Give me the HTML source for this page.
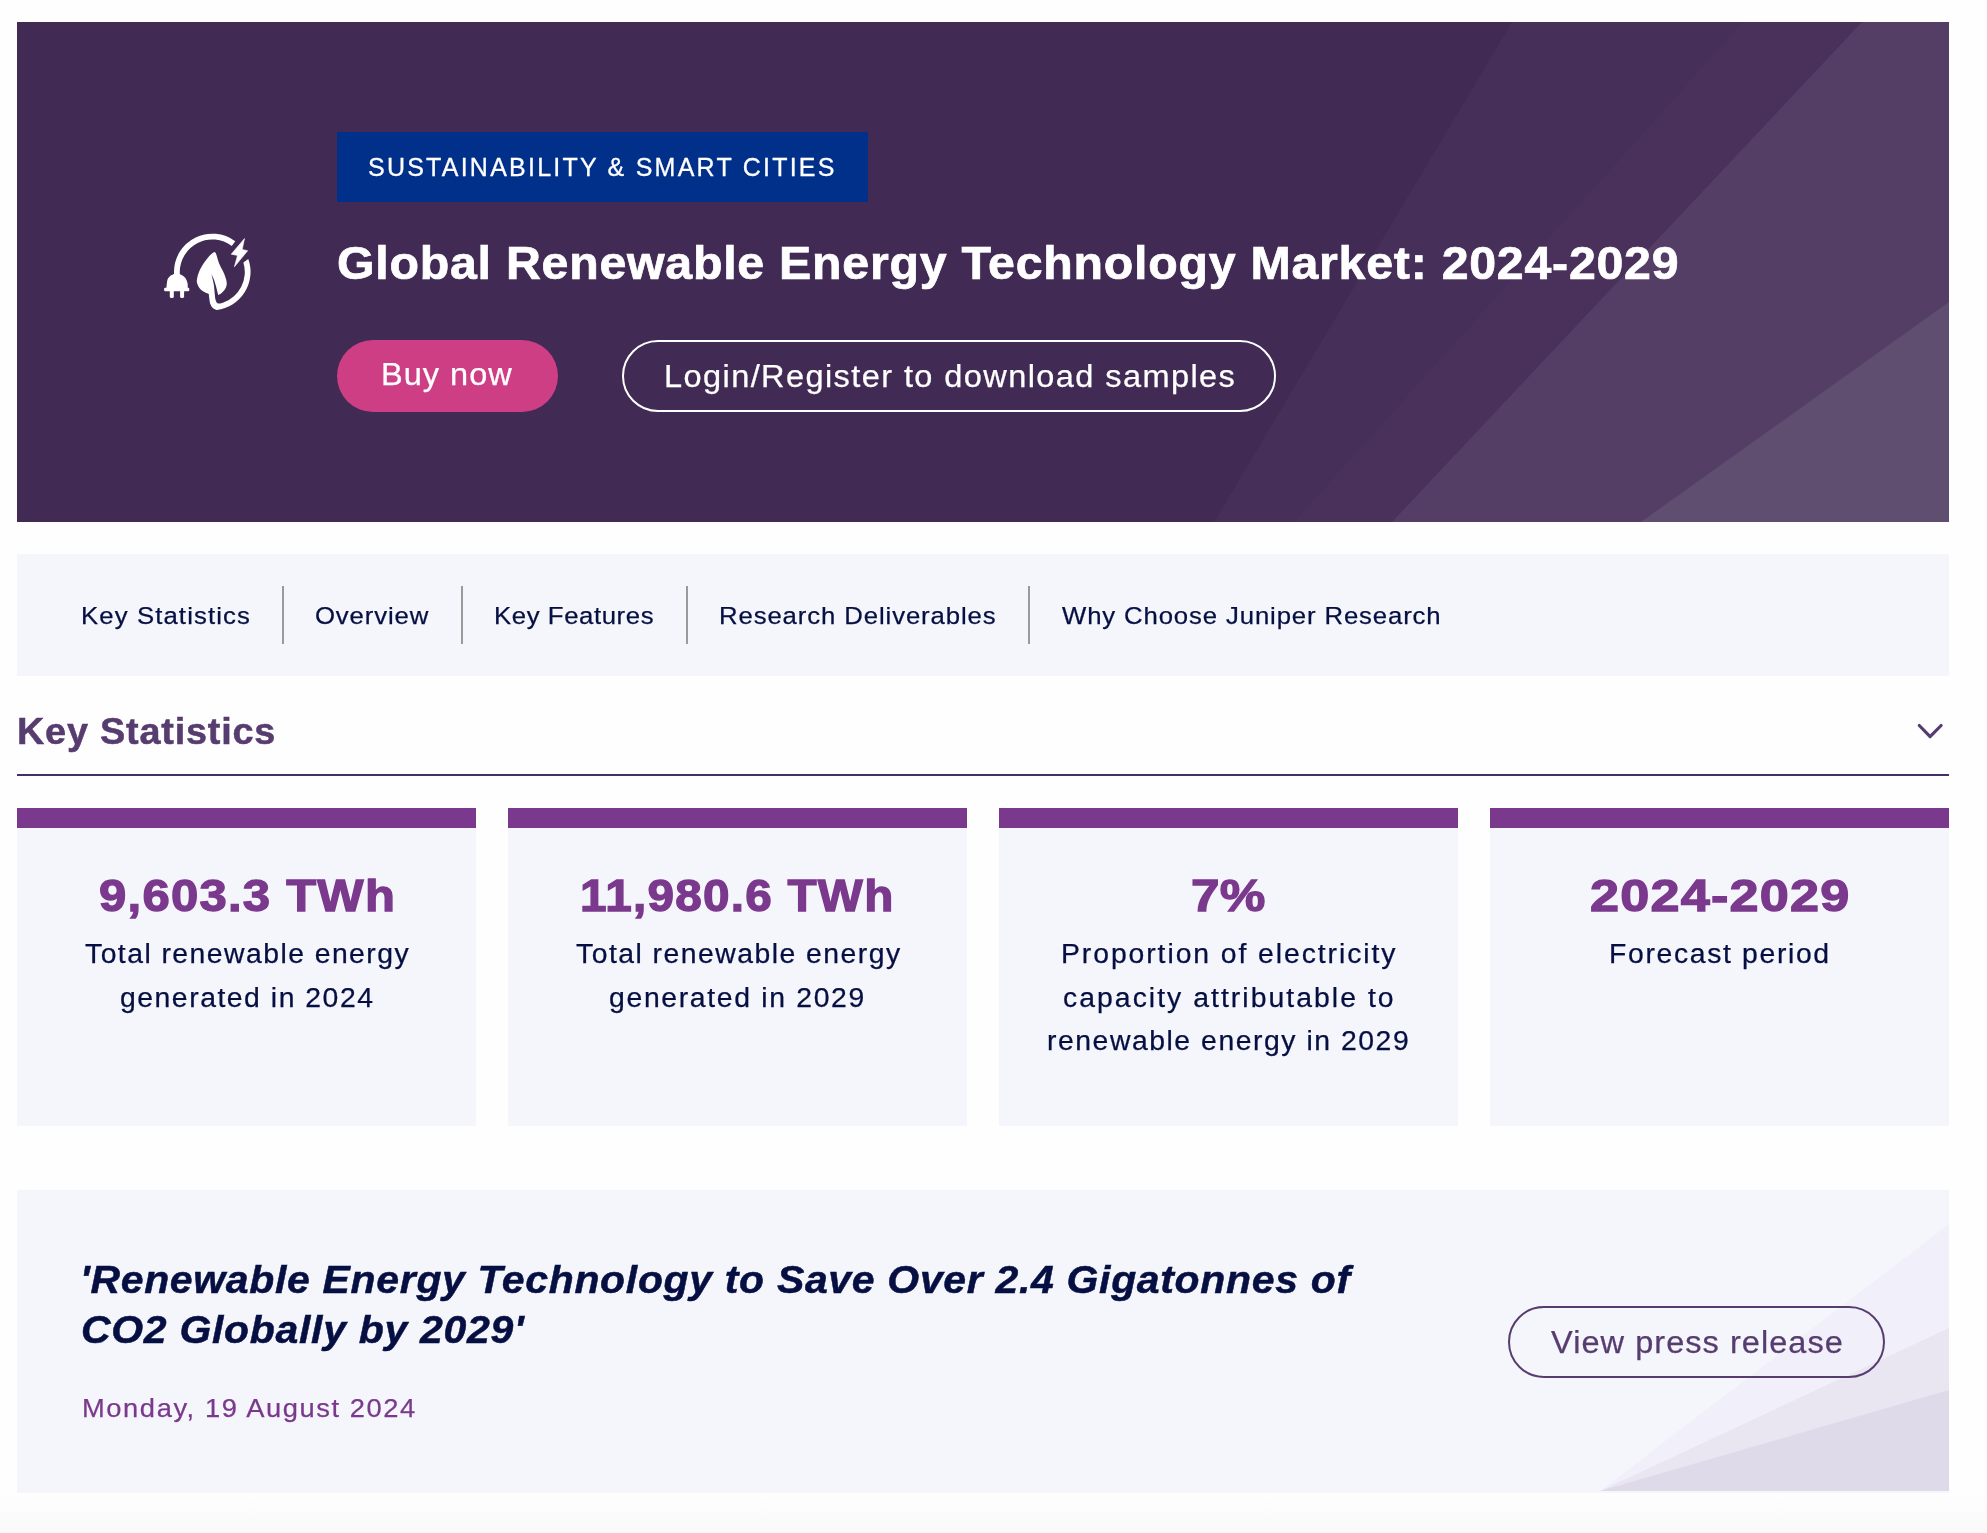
<!DOCTYPE html>
<html lang="en">
<head>
<meta charset="utf-8">
<title>Global Renewable Energy Technology Market: 2024-2029</title>
<style>
*{box-sizing:border-box;margin:0;padding:0}
html,body{width:1987px;height:1533px;overflow:hidden}
body{position:relative;font-family:"Liberation Sans",sans-serif;background:linear-gradient(to bottom,#fefefe 0,#fefefe 1493px,#f9f9fa 1533px);color:#060f42}
.t{position:absolute;white-space:nowrap;line-height:1;transform-origin:0 0;will-change:transform}
#hero{position:absolute;left:17px;top:22px;width:1932px;height:500px;background:#412a53;overflow:hidden}
#hero svg.bands{position:absolute;left:0;top:0;width:1932px;height:500px}
#tag{position:absolute;left:337px;top:132px;width:531px;height:70px;background:#01308a}
#buy{position:absolute;left:337px;top:340px;width:221px;height:72px;border-radius:36px;background:#cd3e84}
#login{position:absolute;left:622px;top:340px;width:654px;height:72px;border-radius:36px;border:2px solid #fff}
#nav{position:absolute;left:17px;top:554px;width:1932px;height:122px;background:#f5f6fb}
.sep{position:absolute;top:586px;width:2px;height:58px;background:#9a9a9b}
#rule{position:absolute;left:17px;top:774px;width:1932px;height:2px;background:#482c63}
#chev{position:absolute;left:1914px;top:719px;width:32px;height:24px}
.card{position:absolute;top:808px;width:459px;height:318px;background:#f5f6fb;border-top:20px solid #7a398c}
#press{position:absolute;left:17px;top:1190px;width:1932px;height:303px;background:#f5f6fb;overflow:hidden}
#press svg{position:absolute;left:0;top:0;width:1932px;height:302px}
#vbtn{position:absolute;left:1508px;top:1306px;width:377px;height:72px;border-radius:36px;border:2px solid #573c70}
</style>
</head>
<body>
<div id="hero">
  <svg class="bands" viewBox="0 0 1932 500" preserveAspectRatio="none">
    <polygon points="1197,500 1495,0 1932,0 1932,500" fill="#46305a"/>
    <polygon points="1277,500 1726,0 1932,0 1932,500" fill="#49315c"/>
    <polygon points="1375,500 1845,0 1932,0 1932,500" fill="#553e66"/>
    <polygon points="1624,500 1932,280 1932,500" fill="#604e70"/>
  </svg>
</div>
<div id="tag"></div>
<svg id="icon" viewBox="155 225 105 95" style="position:absolute;left:155px;top:225px;width:105px;height:95px" fill="#fff">
<path d="M214.0 251.9C213.22 252.57 211.07 253.92 209.30 255.90C207.53 257.88 205.13 261.08 203.40 263.80C201.67 266.52 199.98 269.55 198.90 272.20C197.82 274.85 197.18 277.80 196.90 279.70C196.62 281.60 196.78 282.20 197.20 283.60C197.62 285.00 198.37 286.77 199.40 288.10C200.43 289.43 201.83 290.62 203.40 291.60C204.97 292.58 207.90 293.60 208.80 294.00C208.88 294.75 209.05 296.83 209.30 298.50C209.55 300.17 209.72 302.43 210.30 304.00C210.88 305.57 211.73 306.92 212.80 307.90C213.87 308.88 216.05 309.57 216.70 309.90A38.3 38.3 0 0 0 248.29 258.90L243.38 262.50A32.5 32.5 0 0 1 223.42 302.54C222.88 302.70 221.17 303.39 220.20 303.50C219.23 303.61 218.30 303.58 217.60 303.20C216.90 302.82 216.40 302.07 216.00 301.20C215.60 300.33 215.40 299.12 215.20 298.00C215.00 296.88 215.03 296.73 214.80 294.50C214.57 292.27 214.22 287.40 213.80 284.60C213.38 281.80 212.72 279.43 212.30 277.70C211.88 275.97 211.47 274.78 211.30 274.20C211.72 275.03 212.98 277.05 213.80 279.20C214.62 281.35 215.47 284.47 216.20 287.10C216.93 289.73 217.87 293.68 218.20 295.00C218.78 294.67 220.53 293.98 221.70 293.00C222.87 292.02 224.37 290.50 225.20 289.10C226.03 287.70 226.53 286.17 226.70 284.60C226.87 283.03 226.70 281.68 226.20 279.70C225.70 277.72 224.78 275.18 223.70 272.70C222.62 270.22 220.78 267.35 219.70 264.80C218.62 262.25 217.87 259.38 217.20 257.40C216.53 255.42 216.23 253.82 215.70 252.90C215.17 251.98 214.28 252.07 214.00 251.90Z"/>
<path d="M176.90 275.5L176.90 272.00A35.4 35.4 0 0 1 233.51 243.65" fill="none" stroke="#fff" stroke-width="5.8"/>
<path d="M166.4 288.2C166.57 286.82 166.85 281.87 167.40 279.90C167.95 277.93 168.63 277.37 169.70 276.40C170.77 275.43 173.12 274.48 173.80 274.10L179.4 273.9C179.90 274.15 181.35 274.65 182.40 275.40C183.45 276.15 184.85 277.13 185.70 278.40C186.55 279.67 187.15 281.37 187.50 283.00C187.85 284.63 187.75 287.33 187.80 288.20Z"/><rect x="164.1" y="287.7" width="25.2" height="3.6" rx="1.2"/><rect x="169.8" y="290" width="4" height="8.1" rx="1.6"/><rect x="180.1" y="290" width="4" height="8.1" rx="1.6"/>
<path d="M244.5 238.6L231.2 254.2L237.5 255.4L234.4 266.8L247.7 250.7L242.2 249.5Z" stroke="#fff" stroke-width="0.6" stroke-linejoin="round"/>
</svg>
<div id="buy"></div>
<div id="login"></div>

<div id="nav"></div>
<div class="sep" style="left:282px"></div>
<div class="sep" style="left:461px"></div>
<div class="sep" style="left:686px"></div>
<div class="sep" style="left:1028px"></div>

<svg id="chev" viewBox="0 0 32 24"><path d="M5.3 6.5 L16.1 17.7 L27.1 6.5" fill="none" stroke="#573c70" stroke-width="3.2" stroke-linecap="round" stroke-linejoin="round"/></svg>
<div id="rule"></div>

<div class="card" style="left:17px"></div>
<div class="card" style="left:508px"></div>
<div class="card" style="left:999px"></div>
<div class="card" style="left:1490px"></div>

<div id="press">
  <svg viewBox="0 0 1932 302" preserveAspectRatio="none">
    <polygon points="1583,301 1932,34 1932,301" fill="#f1f0fa"/>
    <polygon points="1583,301 1932,138 1932,301" fill="#e9e5f1"/>
    <polygon points="1583,301 1932,200 1932,301" fill="#dfdae9"/>
  </svg>
</div>
<div id="vbtn"></div>
<span id="tagtxt" class="t" style="left:367.98px;top:155.00px;font-size:25px;color:#fff;letter-spacing:2.236px;-webkit-text-stroke:0.3px #fff;">SUSTAINABILITY &amp; SMART CITIES</span>
<h1 id="title" class="t" style="left:337.04px;top:240.00px;font-size:46px;color:#fff;letter-spacing:0.708px;font-weight:bold;transform:scaleX(1.05);-webkit-text-stroke:0.7px #fff;">Global Renewable Energy Technology Market: 2024-2029</h1>
<a id="buytxt" class="t" style="left:381.34px;top:359.00px;font-size:31px;color:#fff;letter-spacing:0.949px;transform:scaleX(1.05);-webkit-text-stroke:0.25px currentColor;">Buy now</a>
<a id="logintxt" class="t" style="left:663.74px;top:361.00px;font-size:31px;color:#fff;letter-spacing:1.330px;transform:scaleX(1.05);-webkit-text-stroke:0.25px currentColor;">Login/Register to download samples</a>
<a id="n1" class="t" style="left:80.80px;top:604.00px;font-size:24.5px;color:#060f42;letter-spacing:1.059px;transform:scaleX(1.05);-webkit-text-stroke:0.25px currentColor;">Key Statistics</a>
<a id="n2" class="t" style="left:315.09px;top:604.00px;font-size:24.5px;color:#060f42;letter-spacing:0.821px;transform:scaleX(1.05);-webkit-text-stroke:0.25px currentColor;">Overview</a>
<a id="n3" class="t" style="left:494.40px;top:604.00px;font-size:24.5px;color:#060f42;letter-spacing:0.567px;transform:scaleX(1.05);-webkit-text-stroke:0.25px currentColor;">Key Features</a>
<a id="n4" class="t" style="left:719.29px;top:604.00px;font-size:24.5px;color:#060f42;letter-spacing:0.850px;transform:scaleX(1.05);-webkit-text-stroke:0.25px currentColor;">Research Deliverables</a>
<a id="n5" class="t" style="left:1062.28px;top:604.00px;font-size:24.5px;color:#060f42;letter-spacing:0.828px;transform:scaleX(1.05);-webkit-text-stroke:0.25px currentColor;">Why Choose Juniper Research</a>
<h2 id="h2" class="t" style="left:17.17px;top:714.00px;font-size:36px;color:#573c70;letter-spacing:0.759px;font-weight:bold;transform:scaleX(1.05);-webkit-text-stroke:0.5px #573c70;">Key Statistics</h2>
<strong id="v1" class="t" style="left:98.99px;top:873.00px;font-size:45px;color:#7a398c;letter-spacing:1.134px;font-weight:bold;transform:scaleX(1.09);-webkit-text-stroke:1.3px #7a398c;">9,603.3 TWh</strong>
<strong id="v2" class="t" style="left:580.23px;top:873.00px;font-size:45px;color:#7a398c;letter-spacing:1.173px;font-weight:bold;transform:scaleX(1.06);-webkit-text-stroke:1.3px #7a398c;">11,980.6 TWh</strong>
<strong id="v3" class="t" style="left:1190.98px;top:873.00px;font-size:45px;color:#7a398c;letter-spacing:0.160px;font-weight:bold;transform:scaleX(1.14);-webkit-text-stroke:1.3px #7a398c;">7%</strong>
<strong id="v4" class="t" style="left:1589.87px;top:873.00px;font-size:45px;color:#7a398c;letter-spacing:1.041px;font-weight:bold;transform:scaleX(1.16);-webkit-text-stroke:1.3px #7a398c;">2024-2029</strong>
<p id="d1a" class="t" style="left:84.67px;top:941.00px;font-size:27px;color:#060f42;letter-spacing:1.383px;transform:scaleX(1.05);-webkit-text-stroke:0.25px currentColor;">Total renewable energy</p>
<p id="d1b" class="t" style="left:119.94px;top:985.00px;font-size:27px;color:#060f42;letter-spacing:1.452px;transform:scaleX(1.05);-webkit-text-stroke:0.25px currentColor;">generated in 2024</p>
<p id="d2a" class="t" style="left:575.67px;top:941.00px;font-size:27px;color:#060f42;letter-spacing:1.405px;transform:scaleX(1.05);-webkit-text-stroke:0.25px currentColor;">Total renewable energy</p>
<p id="d2b" class="t" style="left:609.24px;top:985.00px;font-size:27px;color:#060f42;letter-spacing:1.592px;transform:scaleX(1.05);-webkit-text-stroke:0.25px currentColor;">generated in 2029</p>
<p id="d3a" class="t" style="left:1060.53px;top:941.00px;font-size:27px;color:#060f42;letter-spacing:1.829px;transform:scaleX(1.05);-webkit-text-stroke:0.25px currentColor;">Proportion of electricity</p>
<p id="d3b" class="t" style="left:1062.72px;top:985.00px;font-size:27px;color:#060f42;letter-spacing:1.942px;transform:scaleX(1.05);-webkit-text-stroke:0.25px currentColor;">capacity attributable to</p>
<p id="d3c" class="t" style="left:1047.35px;top:1028.00px;font-size:27px;color:#060f42;letter-spacing:1.466px;transform:scaleX(1.05);-webkit-text-stroke:0.25px currentColor;">renewable energy in 2029</p>
<p id="d4a" class="t" style="left:1609.43px;top:941.00px;font-size:27px;color:#060f42;letter-spacing:1.575px;transform:scaleX(1.05);-webkit-text-stroke:0.25px currentColor;">Forecast period</p>
<em id="pt1" class="t" style="left:80.01px;top:1260.00px;font-size:39px;color:#060f42;letter-spacing:0.654px;font-weight:bold;font-style:italic;transform:scaleX(1.05);-webkit-text-stroke:0.5px #060f42;">'Renewable Energy Technology to Save Over 2.4 Gigatonnes of</em>
<em id="pt2" class="t" style="left:81.09px;top:1310.00px;font-size:39px;color:#060f42;letter-spacing:0.676px;font-weight:bold;font-style:italic;transform:scaleX(1.05);-webkit-text-stroke:0.5px #060f42;">CO2 Globally by 2029'</em>
<time id="date" class="t" style="left:81.62px;top:1395.00px;font-size:26px;color:#7a398c;letter-spacing:1.509px;transform:scaleX(1.05);-webkit-text-stroke:0.25px currentColor;">Monday, 19 August 2024</time>
<a id="vtxt" class="t" style="left:1550.65px;top:1327.00px;font-size:31px;color:#573c70;letter-spacing:0.980px;transform:scaleX(1.05);-webkit-text-stroke:0.25px currentColor;">View press release</a>
</body>
</html>
